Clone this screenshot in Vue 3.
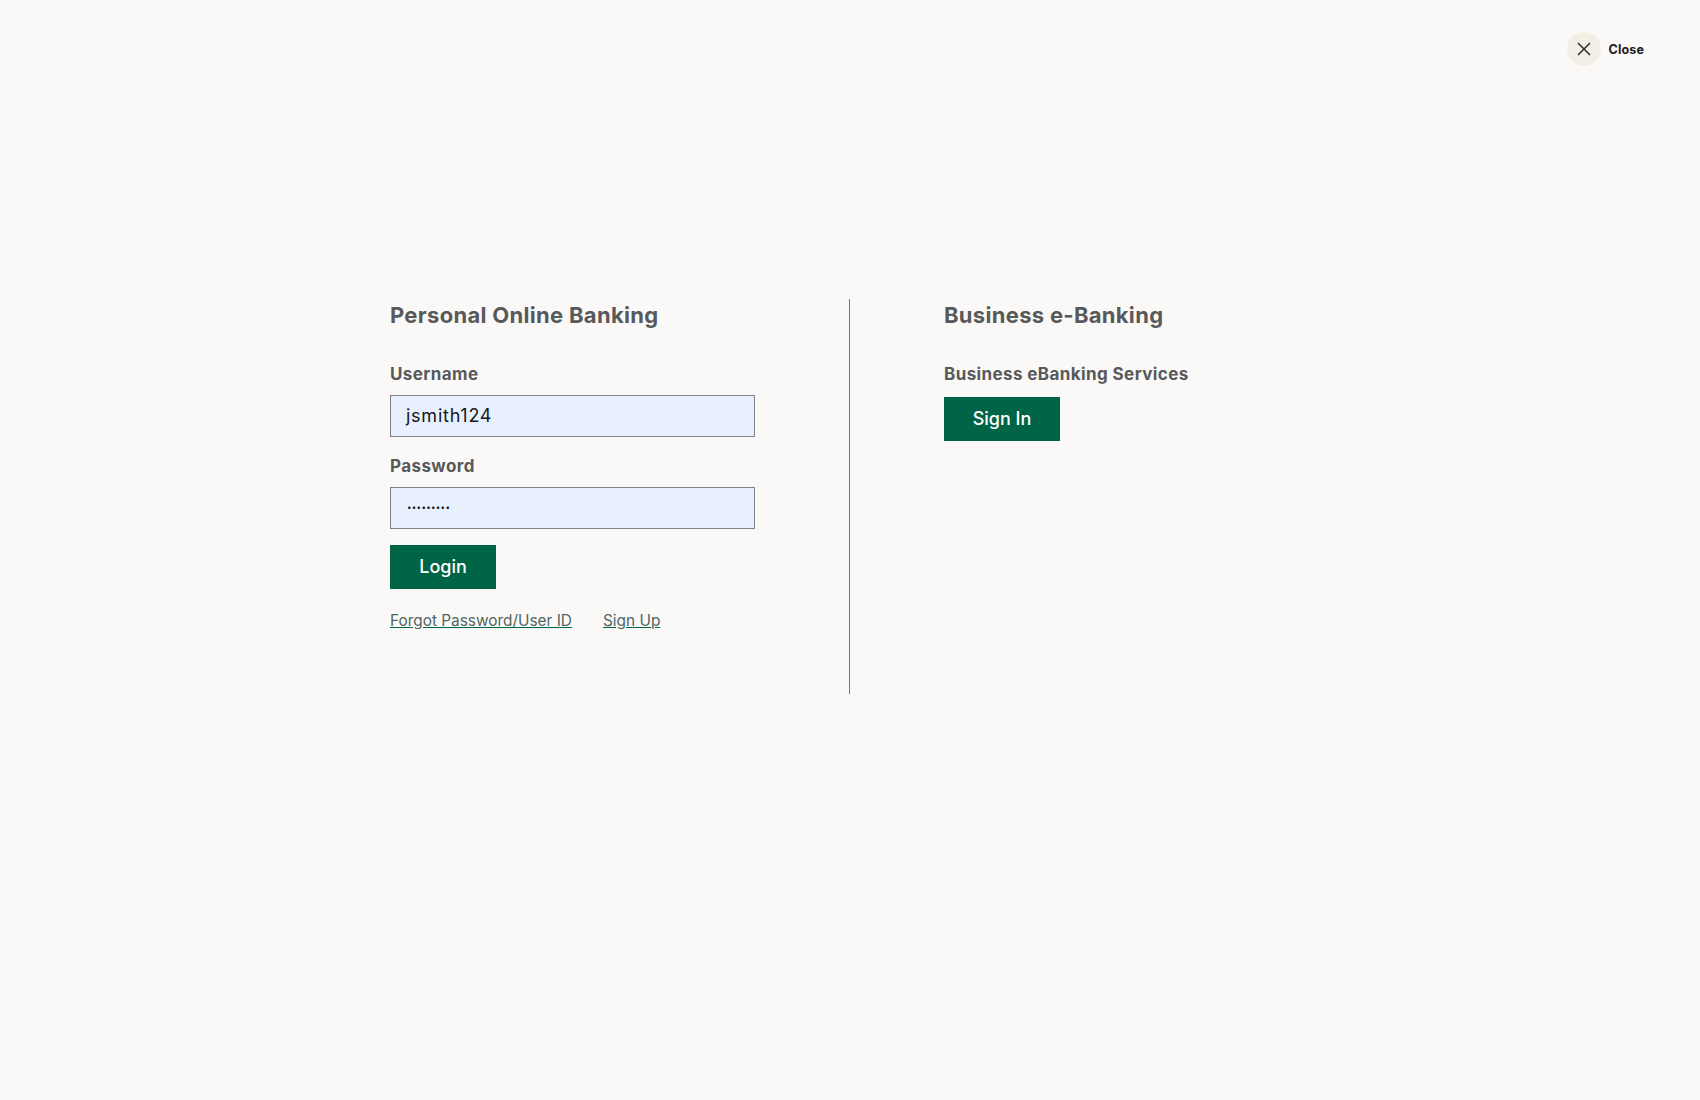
<script setup>
import { ref } from 'vue';

const username = ref('jsmith124');
const password = ref('•••••••••');
</script>

<template>
    <div class="page">
        <!-- Close button top right -->
        <div class="top-bar">
            <button class="close-button">
                <span class="close-icon">
                    <svg width="14" height="14" viewBox="0 0 14 14">
                        <path d="M1 1 L13 13 M13 1 L1 13" stroke="#2a2f36" stroke-width="1.5" fill="none" />
                    </svg>
                </span>
                <span>Close</span>
            </button>
        </div>

        <div class="login-panels">
            <!-- Personal login -->
            <section class="panel personal">
                <h2>Personal Online Banking</h2>
                <label class="first-label">Username</label>
                <div class="field user">{{ username }}</div>
                <label>Password</label>
                <div class="field secret">{{ password }}</div>
                <button class="green-button login">Login</button>
                <div class="links">
                    <a href="#">Forgot Password/User ID</a>
                    <a href="#">Sign Up</a>
                </div>
            </section>

            <!-- Business login -->
            <section class="panel business">
                <h2>Business e-Banking</h2>
                <label class="first-label">Business eBanking Services</label>
                <button class="green-button sign-in">Sign In</button>
            </section>
        </div>
    </div>
</template>

<style>
body {
    background: #fbf9f7;
}
</style>

<style scoped>
.page {
    min-height: 1100px;
    box-sizing: border-box;
    padding: 32px 56px 0 390px;
    font-family: Inter, "Liberation Sans", sans-serif;
    color: #58595b;
}

.top-bar {
    display: flex;
    justify-content: flex-end;
    height: 267px;
}

.close-button {
    display: flex;
    align-items: center;
    gap: 8px;
    height: 34px;
    padding: 0;
    border: none;
    background: none;
    font-family: inherit;
    font-size: 12.5px;
    font-weight: 700;
    letter-spacing: 0.15px;
    color: #1c2024;
    cursor: pointer;
}

.close-icon {
    display: flex;
    align-items: center;
    justify-content: center;
    width: 34px;
    height: 34px;
    border-radius: 50%;
    background: #f3eee6;
}

.login-panels {
    display: flex;
    height: 395px;
}

.panel {
    display: flex;
    flex-direction: column;
    align-items: flex-start;
}

.personal {
    width: 459px;
    border-right: 1px solid #77787a;
}

.business {
    padding-left: 94px;
}

h2 {
    margin: 0;
    padding-top: 1px;
    font-size: 22px;
    line-height: 30px;
    font-weight: 700;
    letter-spacing: 0.3px;
}

label {
    font-size: 17px;
    line-height: 22px;
    font-weight: 700;
    letter-spacing: 0.4px;
    margin-bottom: 10px;
}

.first-label {
    margin-top: 33px;
}

.field {
    box-sizing: border-box;
    width: 365px;
    height: 42px;
    padding: 0 15px 2px;
    display: flex;
    align-items: center;
    background: #e8f0fe;
    border: 1px solid #7c8288;
    font-size: 18px;
    letter-spacing: 0.75px;
    color: #14171a;
}

.user {
    margin-bottom: 18px;
}

.secret {
    margin-bottom: 16px;
    font-size: 8px;
    letter-spacing: 0.3px;
    padding-left: 16px;
}

.green-button {
    height: 44px;
    padding: 0 0 2px;
    border: none;
    background: #006546;
    color: #fff;
    font-family: inherit;
    font-size: 18px;
    font-weight: 500;
    cursor: pointer;
}

.login {
    width: 106px;
}

.sign-in {
    width: 116px;
    margin-top: 2px;
}

.links {
    display: flex;
    gap: 31px;
    margin-top: 22px;
    font-size: 15.4px;
    line-height: 20px;
}

.links a {
    color: #4f6664;
    text-decoration: underline;
    text-decoration-color: #006747;
}
</style>
